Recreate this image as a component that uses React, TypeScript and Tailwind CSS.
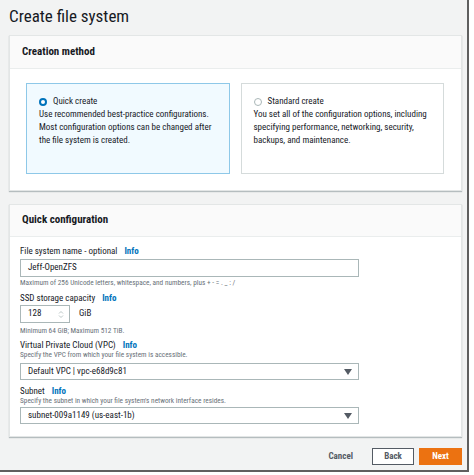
function Info() {
  return <span className="ml-[7px] font-bold text-[#0073bb]">Info</span>
}

function Caret() {
  return (
    <svg width="8" height="6" viewBox="0 0 8 6" className="shrink-0">
      <path d="M0 0h8L4 6z" fill="#545b64" />
    </svg>
  )
}

function RadioCard({ selected, title, desc }: { selected?: boolean; title: string; desc: string[] }) {
  return (
    <div
      className={`flex-1 h-[91px] border px-[12px] pt-[11px] ${
        selected ? 'bg-[#f1faff] border-[#8ec8e8]' : 'bg-white border-[#d5dbdb]'
      }`}
    >
      <div className="flex items-center gap-[6px] text-[9px] leading-[13px] text-[#16191f]">
        {selected ? (
          <span className="w-[8px] h-[8px] rounded-full border-[2.5px] border-[#0073bb] bg-white" />
        ) : (
          <span className="w-[8px] h-[8px] rounded-full border border-[#aab7b8] bg-white" />
        )}
        {title}
      </div>
      <div className="mt-[0px] text-[9px] leading-[13px] text-[#16191f] whitespace-nowrap">
        {desc.map((l) => (
          <div key={l}>{l}</div>
        ))}
      </div>
    </div>
  )
}

export default function App() {
  return (
    <div className="w-[474px] h-[475px] bg-white font-['Roboto_Condensed',Roboto,sans-serif]">
      <div className="w-[469px] h-[472px] bg-[#f2f3f3] border-r-2 border-b-2 border-[#5f5f5f] pl-[9px] pr-[5px] flex flex-col">
        <h1 className="h-[35px] pt-[3px] text-[17px] leading-[26px] text-[#16191f]">Create file system</h1>

        {/* Creation method */}
        <section className="bg-white border border-[#e3e6e6] shadow-[0_1px_1px_rgba(0,28,36,0.25)]">
          <div className="h-[33px] bg-[#fafafa] border-b border-[#eaeded] px-[12px] flex items-center text-[11px] font-bold text-[#16191f]">
            Creation method
          </div>
          <div className="flex gap-[11px] pl-[16px] pr-[17px] pt-[14px] pb-[16px]">
            <RadioCard
              selected
              title="Quick create"
              desc={[
                'Use recommended best-practice configurations.',
                'Most configuration options can be changed after',
                'the file system is created.',
              ]}
            />
            <RadioCard
              title="Standard create"
              desc={[
                'You set all of the configuration options, including',
                'specifying performance, networking, security,',
                'backups, and maintenance.',
              ]}
            />
          </div>
        </section>

        {/* Quick configuration */}
        <section className="mt-[13px] bg-white border border-[#e3e6e6] shadow-[0_1px_1px_rgba(0,28,36,0.25)] h-[233px]">
          <div className="h-[32px] bg-[#fafafa] border-b border-[#eaeded] px-[12px] flex items-center text-[11px] font-bold text-[#16191f]">
            Quick configuration
          </div>
          <div className="px-[10px] pt-[8px] text-[#16191f]">
            <div className="text-[9px] leading-[12px]">
              File system name - optional
              <Info />
            </div>
            <div className="mt-[2px] w-[339px] h-[18px] border border-[#aab7b8] px-[7px] flex items-center text-[9px]">
              Jeff-OpenZFS
            </div>
            <div className="mt-[1px] text-[7.3px] leading-[10px] text-[#687078]">
              Maximum of 256 Unicode letters, whitespace, and numbers, plus + - = . _ : /
            </div>

            <div className="mt-[4px] text-[9px] leading-[12px]">
              SSD storage capacity
              <Info />
            </div>
            <div className="mt-[1px] flex items-center">
              <div className="w-[50px] h-[18px] border border-[#aab7b8] pl-[7px] pr-[5px] flex items-center justify-between text-[9px]">
                128
                <svg width="6" height="9" viewBox="0 0 6 9">
                  <path d="M1 3.5L3 1.5L5 3.5M1 5.5L3 7.5L5 5.5" stroke="#aab7b8" strokeWidth="0.8" fill="none" />
                </svg>
              </div>
              <span className="ml-[9px] text-[9px]">GiB</span>
            </div>
            <div className="mt-[3px] text-[7.3px] leading-[10px] text-[#687078]">Minimum 64 GiB; Maximum 512 TiB.</div>

            <div className="mt-[4px] text-[9px] leading-[10px]">
              Virtual Private Cloud (VPC)
              <Info />
            </div>
            <div className="text-[7.3px] leading-[8px] mt-[1px] text-[#687078]">
              Specify the VPC from which your file system is accessible.
            </div>
            <div className="mt-[4px] w-[339px] h-[17px] border border-[#aab7b8] pl-[7px] pr-[6px] flex items-center justify-between text-[9px]">
              Default VPC | vpc-e68d9c81
              <Caret />
            </div>

            <div className="mt-[6px] text-[9px] leading-[10px]">
              Subnet
              <Info />
            </div>
            <div className="text-[7.3px] leading-[8px] mt-[1px] text-[#687078]">
              Specify the subnet in which your file system&apos;s network interface resides.
            </div>
            <div className="mt-[2px] w-[339px] h-[17px] border border-[#aab7b8] pl-[7px] pr-[6px] flex items-center justify-between text-[9px]">
              subnet-009a1149 (us-east-1b)
              <Caret />
            </div>
          </div>
        </section>

        {/* Footer */}
        <div className="mt-[11px] flex items-center justify-end gap-[5px] text-[9px] font-bold">
          <button className="h-[17px] px-[14px] text-[#545b64]">Cancel</button>
          <button className="h-[17px] w-[42px] border border-[#545b64] bg-white text-[#545b64]">Back</button>
          <button className="h-[17px] w-[43px] bg-[#ec7211] text-white">Next</button>
        </div>
      </div>
    </div>
  )
}
